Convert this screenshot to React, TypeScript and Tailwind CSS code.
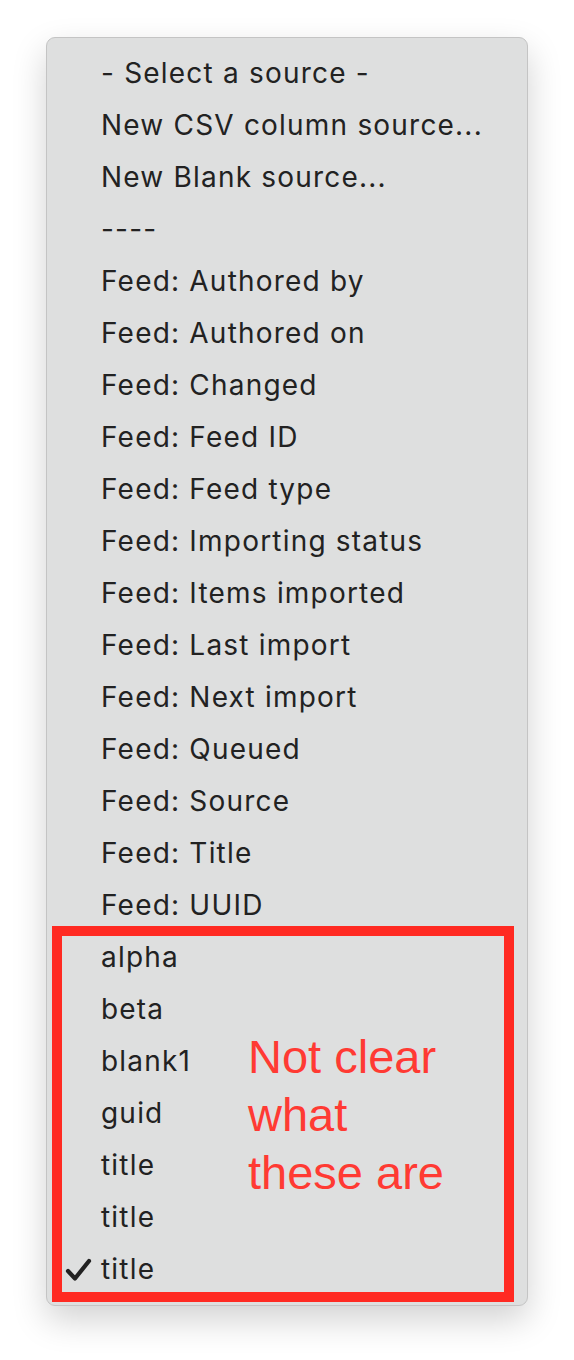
import React from "react";

const items = [
  "- Select a source -",
  "New CSV column source...",
  "New Blank source...",
  "----",
  "Feed: Authored by",
  "Feed: Authored on",
  "Feed: Changed",
  "Feed: Feed ID",
  "Feed: Feed type",
  "Feed: Importing status",
  "Feed: Items imported",
  "Feed: Last import",
  "Feed: Next import",
  "Feed: Queued",
  "Feed: Source",
  "Feed: Title",
  "Feed: UUID",
  "alpha",
  "beta",
  "blank1",
  "guid",
  "title",
  "title",
  "title",
];

export default function App() {
  return (
    <div className="w-[574px] h-[1360px] bg-white pt-[37px] pl-[46px]">
      <div className="relative w-[482px] h-[1269px] rounded-[9px] bg-[#dedfdf] border border-[#c4c4c4] shadow-[0_14px_34px_rgba(0,0,0,0.18)] pt-[9px]">
        <div className="flex flex-col">
          {items.map((t, i) => (
            <div
              key={i}
              className="relative h-[52px] flex items-center pl-[54px] text-[28px] text-[#222222] tracking-[1.2px]"
              style={{ fontFamily: "Inter, 'Noto Sans', sans-serif" }}
            >
              {i === items.length - 1 && (
                <svg
                  className="absolute left-[18px] top-[15px]"
                  width="27"
                  height="24"
                  viewBox="0 0 27 24"
                >
                  <path
                    d="M3 13 L10 20.5 L24 3"
                    fill="none"
                    stroke="#222222"
                    strokeWidth="4.2"
                    strokeLinecap="round"
                    strokeLinejoin="round"
                  />
                </svg>
              )}
              {t}
            </div>
          ))}
        </div>
        <div className="absolute left-[5px] top-[888px] w-[462px] h-[376px] border-[10px] border-[#ff2a22]">
          <div
            className="absolute left-[186px] top-[92px] text-[47px] leading-[58px] text-[#ff3a33]"
            style={{ fontFamily: "'Liberation Sans', Arial, sans-serif" }}
          >
            Not clear
            <br />
            what
            <br />
            these are
          </div>
        </div>
      </div>
    </div>
  );
}
